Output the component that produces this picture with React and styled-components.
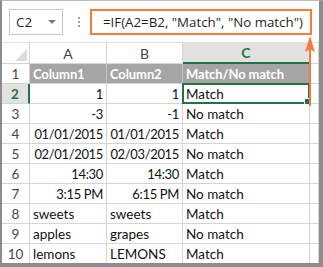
import React from "react";
import styled, { createGlobalStyle, css } from "styled-components";

const GlobalStyle = createGlobalStyle`
  html, body { margin: 0; padding: 0; background: #ffffff; }
  body { font-family: "Lato", "Liberation Sans", sans-serif; }
  * { box-sizing: border-box; }
`;

const GREEN = "#217346";
const ORANGE = "#f37b3b";
const GRID = "#d4d4d4";

const Frame = styled.div`
  position: relative;
  width: 323px;
  height: 267px;
  display: flex;
  flex-direction: column;
  background: #ffffff;
  border-top: 1px solid #b9b9b9;
  border-left: 2px solid #8c8c8c;
  border-right: 4px solid #8c8c8c;
  border-bottom: 4px solid #8c8c8c;
  overflow: hidden;
`;

const FormulaBar = styled.div`
  height: 41px;
  flex: none;
  display: flex;
  align-items: center;
  padding-left: 7px;
`;

const NameBox = styled.div`
  width: 54px;
  height: 26px;
  border: 1px solid #c6c6c6;
  display: flex;
  align-items: center;
  justify-content: space-between;
  padding: 0 6px 0 6px;
  font-family: "Open Sans", "Noto Sans", sans-serif;
  font-size: 13.5px;
  color: #262626;
`;

const Caret = styled.span`
  width: 0;
  height: 0;
  border-left: 4px solid transparent;
  border-right: 4px solid transparent;
  border-top: 4px solid #7a7a7a;
  margin-top: 1px;
`;

const Grip = styled.div`
  margin-left: 15px;
  margin-right: 10px;
  display: flex;
  flex-direction: column;
  gap: 2px;
`;

const GripDot = styled.span`
  width: 2px;
  height: 2px;
  background: #a0a0a0;
`;

const FormulaInput = styled.div`
  width: 222px;
  height: 26px;
  border: 2px solid ${ORANGE};
  display: flex;
  align-items: center;
  padding-left: 11px;
  font-family: "Open Sans", "Noto Sans", sans-serif;
  font-size: 13.3px;
  color: #1f1f1f;
  white-space: nowrap;
`;

const Sheet = styled.div`
  display: grid;
  grid-template-columns: 28px 77px 76px 127px 1fr;
  grid-template-rows: 21px repeat(10, 20px);
  border-top: 1px solid #e2e2e2;
`;

const headerBase = css`
  border-right: 1px solid ${GRID};
  border-bottom: 1px solid ${GRID};
  display: flex;
  align-items: center;
  justify-content: center;
  font-size: 13.5px;
  color: #444444;
`;

const Corner = styled.div`
  ${headerBase};
  position: relative;
  background: #ffffff;

  &::after {
    content: "";
    position: absolute;
    right: 2px;
    bottom: 2px;
    width: 0;
    height: 0;
    border-left: 12px solid transparent;
    border-bottom: 12px solid #dcdcdc;
  }
`;

const ColHead = styled.div`
  ${headerBase};
  font-size: 14px;
  background: ${(p) => (p.$active ? "#e1e1e1" : "#ffffff")};
  ${(p) =>
    p.$active &&
    css`
      color: ${GREEN};
      font-weight: 700;
      border-bottom: 2px solid ${GREEN};
    `}
`;

const RowHead = styled.div`
  ${headerBase};
  background: ${(p) => (p.$active ? "#e1e1e1" : "#ffffff")};
  ${(p) =>
    p.$active &&
    css`
      color: ${GREEN};
      font-weight: 700;
      border-right: 2px solid ${GREEN};
    `}
`;

const Cell = styled.div`
  position: relative;
  border-right: 1px solid ${GRID};
  border-bottom: 1px solid ${GRID};
  display: flex;
  align-items: center;
  justify-content: ${(p) => (p.$num ? "flex-end" : "flex-start")};
  padding: 0 3px 0 3px;
  font-size: ${(p) => (p.$num ? "13px" : "13.5px")};
  letter-spacing: ${(p) => (p.$num ? "-0.35px" : "0")};
  color: #111111;
  white-space: nowrap;
  background: ${(p) => (p.$title ? "#a5a5a5" : "#ffffff")};
  ${(p) =>
    p.$title &&
    css`
      color: #ffffff;
      font-weight: 700;
      font-size: 13px;
      letter-spacing: -0.1px;
      border-right-color: #c4c4c4;
    `}
`;

const Selection = styled.div`
  position: absolute;
  left: -1px;
  top: -1px;
  right: -1px;
  bottom: -1px;
  border: 2px solid ${GREEN};
  pointer-events: none;

  &::after {
    content: "";
    position: absolute;
    right: -4px;
    bottom: -4px;
    width: 6px;
    height: 6px;
    background: ${GREEN};
    border: 1px solid #ffffff;
  }
`;

const Pointer = styled.svg`
  position: absolute;
  left: 302px;
  top: 35px;
  overflow: visible;
`;

const columns = ["A", "B", "C"];

const titles = ["Column1", "Column2", "Match/No match"];

const rows = [
  { a: "1", b: "1", c: "Match", num: true },
  { a: "-3", b: "-1", c: "No match", num: true },
  { a: "01/01/2015", b: "01/01/2015", c: "Match", num: true },
  { a: "02/01/2015", b: "02/03/2015", c: "No match", num: true },
  { a: "14:30", b: "14:30", c: "Match", num: true },
  { a: "3:15 PM", b: "6:15 PM", c: "No match", num: true },
  { a: "sweets", b: "sweets", c: "Match", num: false },
  { a: "apples", b: "grapes", c: "No match", num: false },
  { a: "lemons", b: "LEMONS", c: "Match", num: false },
];

export default function App() {
  return (
    <>
      <GlobalStyle />
      <Frame>
        <FormulaBar>
          <NameBox>
            <span>C2</span>
            <Caret />
          </NameBox>
          <Grip>
            <GripDot />
            <GripDot />
            <GripDot />
          </Grip>
          <FormulaInput>=IF(A2=B2, "Match", "No match")</FormulaInput>
        </FormulaBar>

        <Sheet>
          <Corner />
          {columns.map((c) => (
            <ColHead key={c} $active={c === "C"}>
              {c}
            </ColHead>
          ))}
          <ColHead />

          <RowHead>1</RowHead>
          {titles.map((t) => (
            <Cell key={t} $title>
              {t}
            </Cell>
          ))}
          <Cell />

          {rows.map((r, i) => {
            const n = i + 2;
            return (
              <React.Fragment key={n}>
                <RowHead $active={n === 2}>{n}</RowHead>
                <Cell $num={r.num}>{r.a}</Cell>
                <Cell $num={r.num}>{r.b}</Cell>
                <Cell>
                  {r.c}
                  {n === 2 && <Selection />}
                </Cell>
                <Cell />
              </React.Fragment>
            );
          })}
        </Sheet>

        <Pointer width="12" height="70" viewBox="0 0 12 70">
          <rect x="5" y="12" width="2" height="58" fill={ORANGE} />
          <path d="M6 0 L11 16 L6 13 L1 16 Z" fill={ORANGE} />
        </Pointer>
      </Frame>
    </>
  );
}
